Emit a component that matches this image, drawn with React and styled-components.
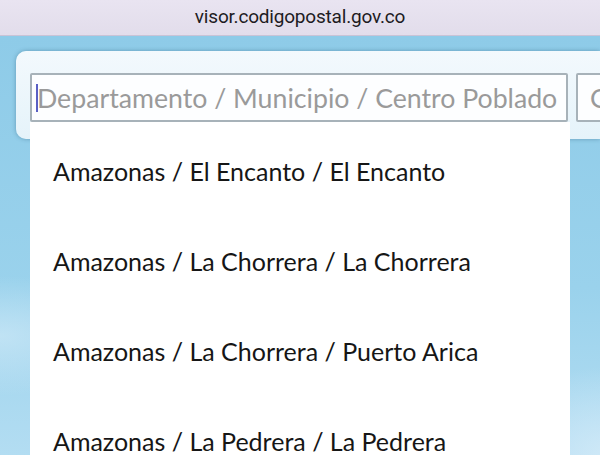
import styled, { createGlobalStyle } from "styled-components";

const ITEMS = [
    "Amazonas / El Encanto / El Encanto",
    "Amazonas / La Chorrera / La Chorrera",
    "Amazonas / La Chorrera / Puerto Arica",
    "Amazonas / La Pedrera / La Pedrera",
];

const GlobalStyle = createGlobalStyle`
    html, body {
        margin: 0;
        padding: 0;
        width: 600px;
        height: 455px;
        overflow: hidden;
    }
    #root {
        height: 455px;
    }
`;

function App() {
    return (
        <>
            <GlobalStyle />
            <Screen>
                <AddressBar>visor.codigopostal.gov.co</AddressBar>
                <Sky>
                    <Panel>
                        <SearchBox>
                            <Input>
                                <Caret />
                                <Placeholder>Departamento / Municipio / Centro Poblado</Placeholder>
                            </Input>
                            <Dropdown>
                                {ITEMS.map(item => (
                                    <Option key={item}>{item}</Option>
                                ))}
                            </Dropdown>
                        </SearchBox>
                        <Input narrow>
                            <Placeholder>C</Placeholder>
                        </Input>
                    </Panel>
                </Sky>
            </Screen>
        </>
    );
}

export default App;

const Screen = styled.div`
    display: flex;
    flex-direction: column;
    height: 455px;
    font-family: Lato, "Noto Sans", sans-serif;
`;

const AddressBar = styled.div`
    height: 36px;
    flex-shrink: 0;
    display: flex;
    align-items: center;
    justify-content: center;
    background: linear-gradient(#e9e4f1, #e2ddeb);
    border-bottom: 1px solid #c9c3d6;
    font-family: Roboto, "Liberation Sans", sans-serif;
    font-size: 19px;
    letter-spacing: -0.2px;
    color: #1d1b22;
    padding-bottom: 3px;
    box-sizing: border-box;
`;

const Sky = styled.div`
    flex: 1;
    padding: 15px 0 0 16px;
    background:
        radial-gradient(ellipse 140px 60px at 0px 300px, rgba(205, 232, 247, 0.7), transparent),
        radial-gradient(ellipse 120px 90px at 610px 420px, rgba(215, 236, 249, 0.8), transparent),
        linear-gradient(#8ecbe8, #9ad2ec 60%, #b3ddf2);
    overflow: hidden;
`;

const Panel = styled.div`
    display: flex;
    gap: 8px;
    height: 88px;
    padding: 22px 0 0 14px;
    box-sizing: border-box;
    border-radius: 10px 0 0 10px;
    background: linear-gradient(#f3f9fd, #e5f3fa);
    box-shadow: 0 0 4px rgba(40, 90, 120, 0.45);
`;

const SearchBox = styled.div`
    position: relative;
    width: 538px;
    flex-shrink: 0;
`;

const Input = styled.div`
    display: flex;
    align-items: center;
    height: 49px;
    width: ${props => props.narrow ? "60px" : "538px"};
    flex-shrink: 0;
    box-sizing: border-box;
    padding-left: ${props => props.narrow ? "12px" : "4px"};
    background: #fdfeff;
    border: 2px solid #a7b2b9;
    border-radius: 2px;
    overflow: hidden;
`;

const Caret = styled.span`
    width: 2px;
    height: 28px;
    background: #5a5fc4;
    margin-right: -1px;
`;

const Placeholder = styled.span`
    font-size: 26.7px;
    color: #9a9a9a;
    white-space: nowrap;
`;

const Dropdown = styled.div`
    position: absolute;
    top: 49px;
    left: 0;
    width: 540px;
    background: #ffffff;
    padding-top: 4px;
`;

const Option = styled.div`
    height: 90px;
    display: flex;
    align-items: center;
    padding-left: 23px;
    font-size: 25px;
    color: #161616;
    white-space: nowrap;
`;
